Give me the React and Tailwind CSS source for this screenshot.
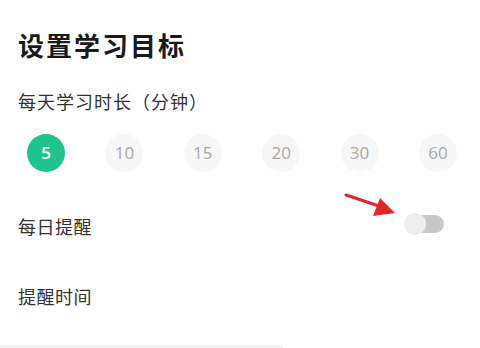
export default function App() {
  const opts = ["5", "10", "15", "20", "30", "60"];
  return (
    <div
      className="relative w-[480px] h-[348px] bg-white overflow-hidden"
      style={{ fontFamily: '"Noto Sans CJK SC", "Noto Sans", sans-serif' }}
    >
      <div className="flex flex-col px-[18px]">
        <div className="pt-[29px] text-[26px] leading-[32px] font-bold text-[#1a1a1a] tracking-[2px]">
          设置学习目标
        </div>
        <div className="mt-[28px] text-[18px] leading-[24px] text-[#333] tracking-[1px]">
          每天学习时长（分钟）
        </div>
        <div className="mt-[21px] ml-[9px] mr-[5px] flex justify-between">
          {opts.map((o, i) => (
            <div
              key={o}
              className={
                i === 0
                  ? "w-[38px] h-[38px] rounded-full bg-[#1fc48a] flex items-center justify-center text-white text-[17px] font-semibold"
                  : "w-[38px] h-[38px] rounded-full bg-[#f7f7f7] flex items-center justify-center text-[#a8a8a8] text-[17px]"
              }
              style={{ fontFamily: '"Open Sans", sans-serif' }}
            >
              {o}
            </div>
          ))}
        </div>
        <div className="mt-[34px] h-[40px] flex items-center justify-between pr-[18px]">
          <span className="text-[18px] text-[#333] tracking-[0.5px]">每日提醒</span>
          <div className="relative w-[40px] h-[22px] -mt-[4px]">
            <div className="absolute right-0 top-[2px] w-[32px] h-[18px] rounded-full bg-[#c8c8c8]"></div>
            <div className="absolute left-0 top-0 w-[22px] h-[22px] rounded-full bg-[#eeeeee]"></div>
          </div>
        </div>
        <div className="mt-[30px] h-[40px] flex items-center">
          <span className="text-[18px] text-[#333] tracking-[0.5px]">提醒时间</span>
        </div>
      </div>
      <div className="absolute left-0 bottom-0 w-[283px] h-[3px] bg-[#f2f2f2]"></div>
      <svg className="absolute left-0 top-0" width="480" height="348" viewBox="0 0 480 348">
        <line x1="346" y1="195" x2="382" y2="207" stroke="#e3262b" strokeWidth="3" strokeLinecap="round" />
        <polygon points="380,198 395,213 373,216" fill="#e3262b" />
      </svg>
    </div>
  );
}
